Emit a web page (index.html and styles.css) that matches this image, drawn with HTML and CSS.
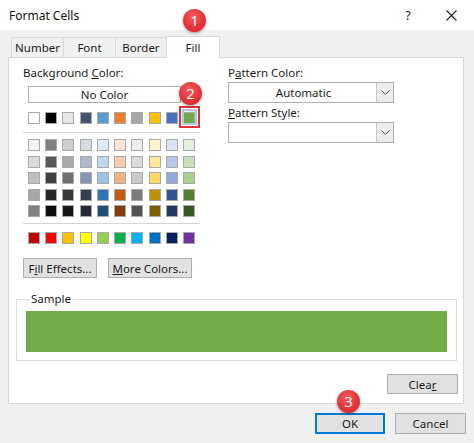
FILE: index.html
```html
<!DOCTYPE html>
<html>
<head>
<meta charset="utf-8">
<title>Format Cells</title>
<link rel="stylesheet" href="styles.css">
</head>
<body>
<div class="dialog">
  <div class="titlebar">
    <span class="title">Format Cells</span>
    <span class="help">?</span>
    <span class="close"><svg width="11" height="11" viewBox="0 0 11 11"><path d="M0.5 0.5 L10.5 10.5 M10.5 0.5 L0.5 10.5" stroke="#222" stroke-width="1.1" fill="none"/></svg></span>
  </div>
  <div class="tabs">
    <div class="tab">Number</div>
    <div class="tab">Font</div>
    <div class="tab tab-narrow">Border</div>
    <div class="tab active">Fill</div>
  </div>
  <div class="panel">
    <div class="top">
      <div class="left">
        <div class="label">Background <u>C</u>olor:</div>
        <div class="nocolor">No Color</div>
        <div class="swatches first">
          <span class="sw" style="background:#ffffff"></span>
          <span class="sw" style="background:#000000"></span>
          <span class="sw" style="background:#e7e6e6"></span>
          <span class="sw" style="background:#44546a"></span>
          <span class="sw" style="background:#5b9bd5"></span>
          <span class="sw" style="background:#ed7d31"></span>
          <span class="sw" style="background:#a5a5a5"></span>
          <span class="sw" style="background:#ffc000"></span>
          <span class="sw" style="background:#4472c4"></span>
          <span class="sw selected" style="background:#70ad47"></span>
        </div>
        <div class="sep"></div>
        <div class="swatches theme">
          <span class="sw" style="background:#f2f2f2"></span>
          <span class="sw" style="background:#808080"></span>
          <span class="sw" style="background:#d0cece"></span>
          <span class="sw" style="background:#d6dce5"></span>
          <span class="sw" style="background:#deebf7"></span>
          <span class="sw" style="background:#fbe5d6"></span>
          <span class="sw" style="background:#ededed"></span>
          <span class="sw" style="background:#fff2cc"></span>
          <span class="sw" style="background:#dae3f3"></span>
          <span class="sw" style="background:#e2f0d9"></span>

          <span class="sw" style="background:#d9d9d9"></span>
          <span class="sw" style="background:#595959"></span>
          <span class="sw" style="background:#aeaaaa"></span>
          <span class="sw" style="background:#adb9ca"></span>
          <span class="sw" style="background:#bdd7ee"></span>
          <span class="sw" style="background:#f8cbad"></span>
          <span class="sw" style="background:#dbdbdb"></span>
          <span class="sw" style="background:#ffe699"></span>
          <span class="sw" style="background:#b4c7e7"></span>
          <span class="sw" style="background:#c5e0b4"></span>

          <span class="sw" style="background:#bfbfbf"></span>
          <span class="sw" style="background:#404040"></span>
          <span class="sw" style="background:#757171"></span>
          <span class="sw" style="background:#8497b0"></span>
          <span class="sw" style="background:#9dc3e6"></span>
          <span class="sw" style="background:#f4b183"></span>
          <span class="sw" style="background:#c9c9c9"></span>
          <span class="sw" style="background:#ffd966"></span>
          <span class="sw" style="background:#8faadc"></span>
          <span class="sw" style="background:#a9d18e"></span>

          <span class="sw" style="background:#a6a6a6"></span>
          <span class="sw" style="background:#262626"></span>
          <span class="sw" style="background:#3a3838"></span>
          <span class="sw" style="background:#333f50"></span>
          <span class="sw" style="background:#2e75b6"></span>
          <span class="sw" style="background:#c55a11"></span>
          <span class="sw" style="background:#7b7b7b"></span>
          <span class="sw" style="background:#bf9000"></span>
          <span class="sw" style="background:#2f5597"></span>
          <span class="sw" style="background:#548235"></span>

          <span class="sw" style="background:#808080"></span>
          <span class="sw" style="background:#0d0d0d"></span>
          <span class="sw" style="background:#171616"></span>
          <span class="sw" style="background:#222a35"></span>
          <span class="sw" style="background:#1f4e79"></span>
          <span class="sw" style="background:#843c0c"></span>
          <span class="sw" style="background:#525252"></span>
          <span class="sw" style="background:#7f6000"></span>
          <span class="sw" style="background:#203864"></span>
          <span class="sw" style="background:#385723"></span>
        </div>
        <div class="sep"></div>
        <div class="swatches standard">
          <span class="sw" style="background:#c00000"></span>
          <span class="sw" style="background:#ff0000"></span>
          <span class="sw" style="background:#ffc000"></span>
          <span class="sw" style="background:#ffff00"></span>
          <span class="sw" style="background:#92d050"></span>
          <span class="sw" style="background:#00b050"></span>
          <span class="sw" style="background:#00b0f0"></span>
          <span class="sw" style="background:#0070c0"></span>
          <span class="sw" style="background:#002060"></span>
          <span class="sw" style="background:#7030a0"></span>
        </div>
        <div class="btnrow">
          <button class="btn fill-effects">F<u>i</u>ll Effects...</button>
          <button class="btn more-colors"><u>M</u>ore Colors...</button>
        </div>
      </div>
      <div class="right">
        <div class="label">P<u>a</u>ttern Color:</div>
        <div class="select">
          <span class="select-text">Automatic</span>
          <span class="arrow"><svg width="9" height="5" viewBox="0 0 9 5"><path d="M0.5 0.5 L4.5 4.5 L8.5 0.5" stroke="#555" stroke-width="1" fill="none"/></svg></span>
        </div>
        <div class="label label2"><u>P</u>attern Style:</div>
        <div class="select">
          <span class="select-text"></span>
          <span class="arrow"><svg width="9" height="5" viewBox="0 0 9 5"><path d="M0.5 0.5 L4.5 4.5 L8.5 0.5" stroke="#555" stroke-width="1" fill="none"/></svg></span>
        </div>
      </div>
    </div>
    <fieldset class="sample">
      <legend>Sample</legend>
      <div class="sample-fill"></div>
    </fieldset>
    <div class="clearrow">
      <button class="btn clear">Clea<u>r</u></button>
    </div>
  </div>
  <div class="footer">
    <button class="btn ok">OK</button>
    <button class="btn cancel">Cancel</button>
  </div>

  <div class="highlight"></div>
  <div class="badge badge1">1</div>
  <div class="badge badge2">2</div>
  <div class="badge badge3">3</div>
</div>
</body>
</html>
```
FILE: styles.css
```css
* { box-sizing: border-box; }

html, body {
  margin: 0;
  padding: 0;
}

body {
  font-family: "Noto Sans", "Open Sans", sans-serif;
  font-size: 11px;
  color: #1a1a1a;
}

.dialog {
  position: relative;
  width: 474px;
  height: 443px;
  background: #f0f0f0;
  overflow: hidden;
}

u { text-decoration: underline; text-underline-offset: 1px; }

/* title bar */
.titlebar {
  height: 30px;
  background: #ffffff;
  display: flex;
  align-items: center;
  padding-left: 9px;
}
.title {
  font-size: 12px;
  flex: 1;
  color: #111;
}
.help {
  font-size: 12px;
  width: 44px;
  text-align: center;
}
.close {
  width: 44px;
  display: flex;
  justify-content: center;
  padding-right: 2px;
}

/* tabs */
.tabs {
  display: flex;
  align-items: flex-end;
  padding-left: 11px;
  margin-top: 6px;
  height: 21px;
  position: relative;
  z-index: 2;
}
.tab {
  width: 52px;
  height: 20px;
  border: 1px solid #d9d9d9;
  border-bottom: none;
  border-right: none;
  display: flex;
  align-items: center;
  justify-content: center;
  font-size: 11.5px;
  background: #f0f0f0;
}
.tab-narrow { width: 51px; }
.tab.active {
  width: 54px;
  height: 22px;
  margin-bottom: -1px;
  background: #ffffff;
  border-right: 1px solid #d9d9d9;
  padding-bottom: 1px;
}

/* panel */
.panel {
  margin-left: 8px;
  width: 456px;
  height: 347px;
  background: #ffffff;
  border: 1px solid #d9d9d9;
  padding-top: 8px;
}

.top {
  display: flex;
  padding-left: 14px;
}
.left {
  width: 205px;
}
.label {
  line-height: 14px;
  font-size: 11.5px;
}
.nocolor {
  margin: 6px 0 0 5px;
  width: 153px;
  height: 17px;
  border: 1px solid #adadad;
  background: #fff;
  display: flex;
  align-items: center;
  justify-content: center;
  font-size: 11.5px;
}

.swatches {
  display: grid;
  grid-template-columns: repeat(10, 12px);
  column-gap: 5.22px;
  row-gap: 4.6px;
  margin-left: 5px;
}
.swatches.first { margin-top: 9px; }
.swatches.theme { margin-top: 6px; }
.swatches.standard { margin-top: 8px; }
.sw {
  display: block;
  width: 12px;
  height: 12px;
  border: 1px solid #a9a9a9;
}
.sep {
  margin-top: 8px;
  width: 177px;
  height: 1px;
  background: #d4d4d4;
}
.swatches.theme + .sep { margin-top: 6px; }

.btnrow {
  display: flex;
  gap: 11px;
  margin-top: 14px;
}

.btn {
  font-family: inherit;
  font-size: 11.5px;
  color: #1a1a1a;
  background: #e1e1e1;
  border: 1px solid #adadad;
  height: 20px;
  padding: 0;
  display: flex;
  align-items: center;
  justify-content: center;
}
.fill-effects { width: 74px; }
.more-colors { width: 84px; }

.right {
  width: 166px;
}
.right .label { margin-left: 0; }
.select {
  margin-top: 2px;
  height: 21px;
  border: 1px solid #adadad;
  background: #fff;
  display: flex;
}
.select-text {
  flex: 1;
  display: flex;
  align-items: center;
  justify-content: center;
  font-size: 11.5px;
  padding-left: 2px;
}
.arrow {
  width: 17px;
  border-left: 1px solid #c4c4c4;
  background: #ececec;
  display: flex;
  align-items: center;
  justify-content: center;
}
.label2 { margin-top: 3px; }
.label2 + .select { margin-top: 2px; }

/* sample */
.sample {
  margin: 14px 6px 0 7px;
  padding: 5px 9px 8px 9px;
  border: 1px solid #dcdcdc;
  min-width: 0;
}
.sample legend {
  padding: 0 2px;
  margin-left: 3px;
  line-height: 14px;
  font-size: 11.5px;
}
.sample-fill {
  height: 41px;
  background: #70ad47;
}

.clearrow {
  display: flex;
  justify-content: flex-end;
  padding-right: 5px;
  margin-top: 13px;
}
.clear { width: 71px; }

/* footer */
.footer {
  display: flex;
  justify-content: flex-end;
  gap: 10px;
  padding: 9px 8px 0 0;
}
.footer .btn { height: 21px; }
.ok {
  width: 70px;
  border: 2px solid #0078d7;
}
.cancel { width: 71px; }

/* annotations */
.highlight {
  position: absolute;
  left: 179px;
  top: 106px;
  width: 21px;
  height: 22px;
  border: 2px solid #e0323a;
  box-shadow: inset 0 0 0 1px #fff, inset 0 0 0 3px #b8c9de;
}
.badge {
  position: absolute;
  width: 23px;
  height: 23px;
  border-radius: 50%;
  background: radial-gradient(circle at 45% 35%, #f15b5e 0%, #e2353a 55%, #c9262b 100%);
  box-shadow: 0 1px 3px rgba(0,0,0,0.35);
  color: #fff;
  font-family: "Open Sans", "Noto Sans", sans-serif;
  font-size: 15px;
  line-height: 23px;
  text-align: center;
}
.badge1 { left: 183px; top: 9px; }
.badge2 { left: 179px; top: 82px; }
.badge3 { left: 337px; top: 390px; }
```
